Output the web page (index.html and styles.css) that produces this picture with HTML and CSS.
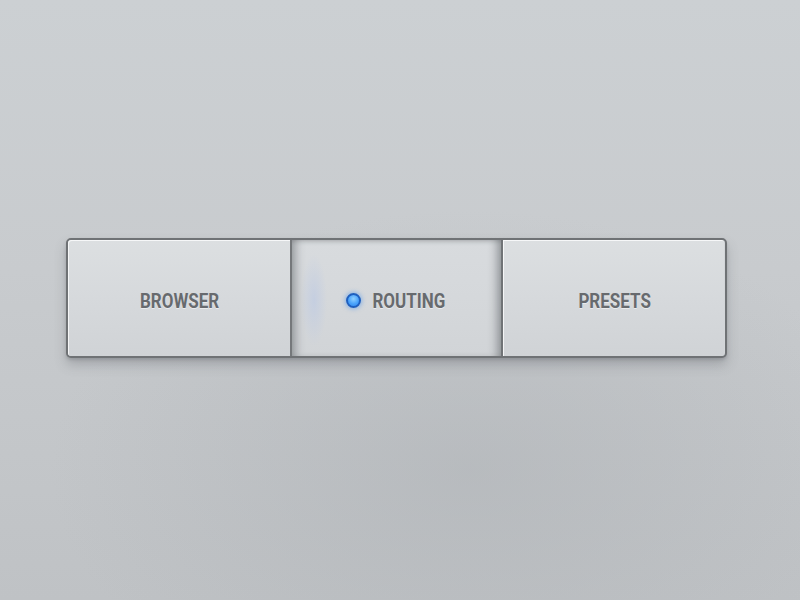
FILE: index.html
```html
<!DOCTYPE html>
<html>
<head>
<meta charset="utf-8">
<link rel="stylesheet" href="styles.css">
</head>
<body>
<div class="stage">
  <div class="bar">
    <div class="btn btn-left"><span class="label">BROWSER</span></div>
    <div class="divider"></div>
    <div class="btn btn-active">
      <span class="led"></span><span class="label">ROUTING</span>
    </div>
    <div class="divider divider-right"></div>
    <div class="btn btn-right"><span class="label">PRESETS</span></div>
  </div>
</div>
</body>
</html>
```

FILE: styles.css
```css
html, body {
  margin: 0;
  padding: 0;
}
body {
  width: 800px;
  height: 600px;
  overflow: hidden;
  background:
    radial-gradient(ellipse 420px 260px at 470px 470px, rgba(170,174,178,0.45), rgba(170,174,178,0) 100%),
    linear-gradient(180deg, #ccd0d3 0%, #c8cbce 45%, #bfc2c5 100%);
  font-family: Roboto, "Liberation Sans", sans-serif;
}
.stage {
  padding: 238px 0 0 66px;
}
.bar {
  display: flex;
  width: 657px;
  height: 116px;
  border: 2px solid #6f7275;
  border-radius: 5px;
  background: #d3d6d9;
  box-shadow: 0 7px 12px rgba(90,94,98,0.3), 0 2px 3px rgba(90,94,98,0.25);
  overflow: hidden;
}
.btn {
  display: flex;
  align-items: center;
  justify-content: center;
  padding-top: 5px;
  padding-left: 2px;
  box-sizing: border-box;
  background: linear-gradient(180deg, #dcdfe1 0%, #d6d9dc 50%, #d0d3d6 100%);
  box-shadow: inset 1px 1px 0 rgba(255,255,255,0.75);
}
.btn-left {
  width: 222px;
  border-radius: 3px 0 0 3px;
}
.btn-right {
  width: 221px;
  border-radius: 0 3px 3px 0;
}
.btn-active {
  width: 209px;
  padding-left: 4px;
  background:
    radial-gradient(ellipse 13px 46px at 22px 60px, rgba(186,200,228,0.6), rgba(186,200,228,0) 100%),
    linear-gradient(180deg, #d8dbde 0%, #d5d8db 50%, #d1d4d7 100%);
  box-shadow:
    inset 10px 0 9px -6px rgba(80,84,88,0.45),
    inset -10px 0 9px -6px rgba(80,84,88,0.5),
    inset 0 4px 5px -3px rgba(80,84,88,0.3);
}
.divider {
  width: 2px;
  background: #75787b;
}
.divider-right {
  width: 2px;
  background: #707376;
  box-shadow: 1px 0 0 rgba(255,255,255,0.6);
}
.label {
  display: inline-block;
  font-size: 20px;
  font-weight: 700;
  color: #676a6e;
  transform: scaleX(0.85);
  text-shadow: 0 1px 0 rgba(255,255,255,0.5);
  line-height: 1;
}
.led {
  display: inline-block;
  width: 11px;
  height: 11px;
  border-radius: 50%;
  border: 2px solid #1e5fbf;
  background: radial-gradient(circle at 50% 35%, #8fd0ff 0%, #4aa3fb 55%, #2f86ec 100%);
  box-shadow: 0 0 4px 1px rgba(60,140,240,0.5);
  margin-right: 5px;
  margin-top: -1px;
}
```
